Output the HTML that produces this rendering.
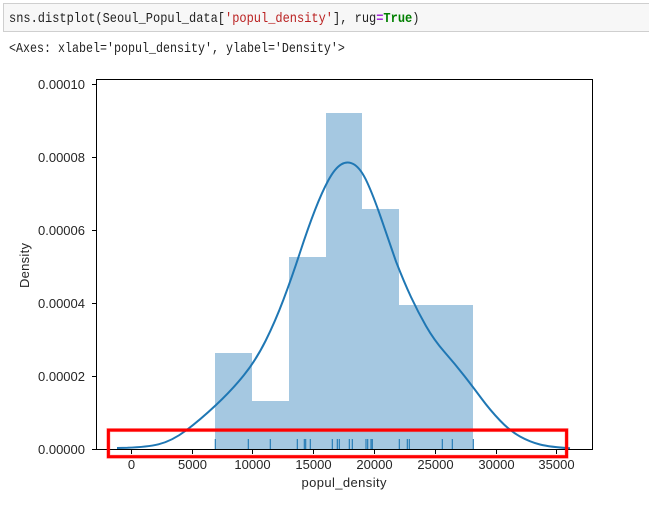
<!DOCTYPE html>
<html><head><meta charset="utf-8">
<style>
html,body{margin:0;padding:0;background:#fff;width:649px;height:506px;overflow:hidden}
#cell{position:absolute;left:3px;top:3px;width:646px;height:29px;box-sizing:border-box;background:#f7f7f7;border:1px solid #cfcfcf;border-right:none}
.code{position:absolute;left:9px;font-family:"Liberation Mono","NanumGothic",monospace;white-space:pre;color:#222;transform-origin:0 50%}
#l1{top:11px;font-size:14px;line-height:16px;transform:scaleX(.857)}
#l2{top:41px;font-size:14px;line-height:16px;transform:scaleX(.833)}
.s{color:#ba2121}.o{color:#a62bd9;font-weight:bold}.k{color:#008000;font-weight:bold}
svg{position:absolute;left:0;top:0}
text{font-family:"Liberation Sans",sans-serif;font-size:13px;fill:#262626}
</style></head><body>
<div id="cell"></div>
<div class="code" id="l1">sns.distplot(Seoul_Popul_data[<span class="s">'popul_density'</span>], rug<span class="o">=</span><span class="k">True</span>)</div>
<div class="code" id="l2">&lt;Axes: xlabel='popul_density', ylabel='Density'&gt;</div>
<svg width="649" height="506" viewBox="0 0 649 506">
<g fill="#a5c8e1">
<rect x="215" y="353" width="37" height="96"/>
<rect x="252" y="401" width="37" height="48"/>
<rect x="289" y="257" width="37" height="192"/>
<rect x="326" y="113" width="36" height="336"/>
<rect x="362" y="209" width="37" height="240"/>
<rect x="399" y="305" width="74" height="144"/>
</g>
<path fill="none" stroke="#1f77b4" stroke-width="2" d="M117 448 Q145 447.6 158.5 444.3 Q172 441 186 430.5 Q200 420 216 405 Q232 390 244 375 Q256 360 265.5 341 Q275 322 283.5 299.5 Q292 277 300 252.5 Q308 228 315 210 Q322 192 328.5 180 Q335 168 341.5 164.2 Q348 160.5 354.5 164.7 Q361 169 367 182 Q373 195 380.5 216.5 Q388 238 396 261.5 Q404 282 411 297 Q418 312 426 326 Q434 340 444.5 352 Q455 364 464 375.5 Q473 387 481.5 398.5 Q490 410 500 420.5 Q510 431 520 436.5 Q530 442 540 444.5 Q550 447 570 448.3"/>
<path fill="none" stroke="#1f77b4" stroke-width="1.1" d="M215.3 439V449M248.3 439V449M270.3 439V449M297.3 439V449M304.3 439V449M305.7 439V449M310.3 439V449M332.3 439V449M337.3 439V449M339.3 439V449M349.3 439V449M352.3 439V449M366 439V449M367.7 439V449M371 439V449M372.3 439V449M399.3 439V449M407.3 439V449M409.3 439V449M442.3 439V449M452.3 439V449M473.3 439V449"/>
<rect x="96.5" y="79.5" width="496" height="370" fill="none" stroke="#000" stroke-width="1"/>
<path stroke="#000" stroke-width="1" fill="none" d="M92 84.5H96M92 157.5H96M92 230.5H96M92 303.5H96M92 376.5H96M92 449.5H96M131.5 450V454M192.5 450V454M252.5 450V454M313.5 450V454M374.5 450V454M435.5 450V454M496.5 450V454M556.5 450V454"/>
<g text-anchor="end">
<text x="85" y="89">0.00010</text>
<text x="85" y="162">0.00008</text>
<text x="85" y="235">0.00006</text>
<text x="85" y="308">0.00004</text>
<text x="85" y="381">0.00002</text>
<text x="85" y="454">0.00000</text>
</g>
<g text-anchor="middle">
<text x="131.5" y="469">0</text>
<text x="192.5" y="469">5000</text>
<text x="252.5" y="469">10000</text>
<text x="313.5" y="469">15000</text>
<text x="374.5" y="469">20000</text>
<text x="435.5" y="469">25000</text>
<text x="496.5" y="469">30000</text>
<text x="556.5" y="469">35000</text>
<text x="344" y="487" textLength="85" lengthAdjust="spacing">popul_density</text>
<text transform="translate(29,265.5) rotate(-90)" textLength="45" lengthAdjust="spacing">Density</text>
</g>
<rect x="108.4" y="430.1" width="458.2" height="26.6" fill="none" stroke="#ff0000" stroke-opacity=".3" stroke-width="4"/>
<rect x="108.4" y="430.1" width="458.2" height="26.6" fill="none" stroke="#ff0000" stroke-width="3"/>
</svg>
</body></html>
